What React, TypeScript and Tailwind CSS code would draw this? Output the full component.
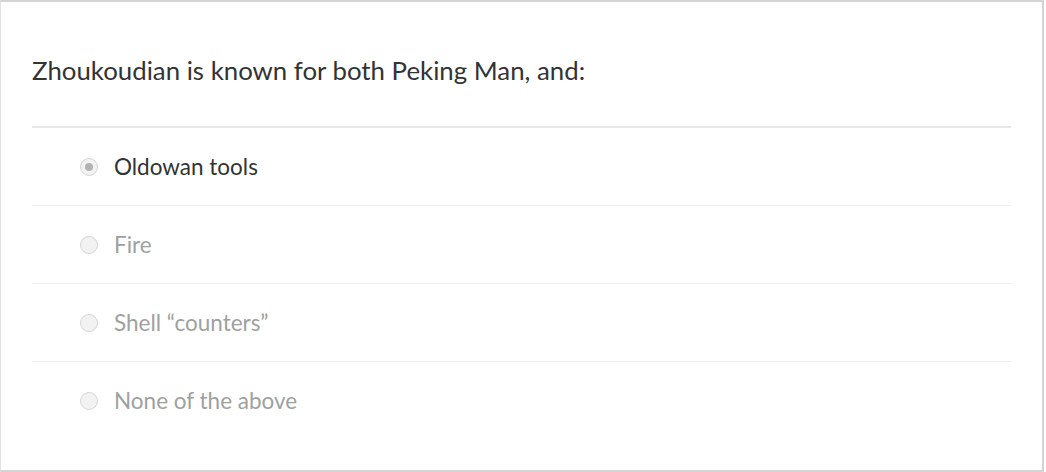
export default function App() {
  const options = [
    { label: "Oldowan tools", selected: true },
    { label: "Fire", selected: false },
    { label: "Shell \u201ccounters\u201d", selected: false },
    { label: "None of the above", selected: false },
  ];

  return (
    <div className="w-[1044px] h-[472px] bg-white border-2 border-[#d4d4d4] border-l border-l-[#e2e2e2] font-['Lato',sans-serif]">
      <div className="px-[31px]">
        <h2 className="pt-[52px] pb-[40px] text-[25.8px] leading-[32px] text-[#333]">
          Zhoukoudian is known for both Peking Man, and:
        </h2>
        <div className="border-t-2 border-[#e6e6e6]">
          {options.map((option, i) => (
            <div
              key={option.label}
              className={`flex items-center h-[78px] pl-[48px] ${
                i < options.length - 1 ? "border-b border-[#eeeeee]" : ""
              }`}
            >
              <span className="w-[18px] h-[18px] rounded-full border border-[#d6d6d6] bg-[#f2f2f2] flex items-center justify-center">
                {option.selected && <span className="w-[8px] h-[8px] rounded-full bg-[#b3b3b3]" />}
              </span>
              <span
                className={`ml-[16px] text-[22.5px] ${
                  option.selected ? "text-[#333]" : "text-[#a0a0a0]"
                }`}
              >
                {option.label}
              </span>
            </div>
          ))}
        </div>
      </div>
    </div>
  );
}
